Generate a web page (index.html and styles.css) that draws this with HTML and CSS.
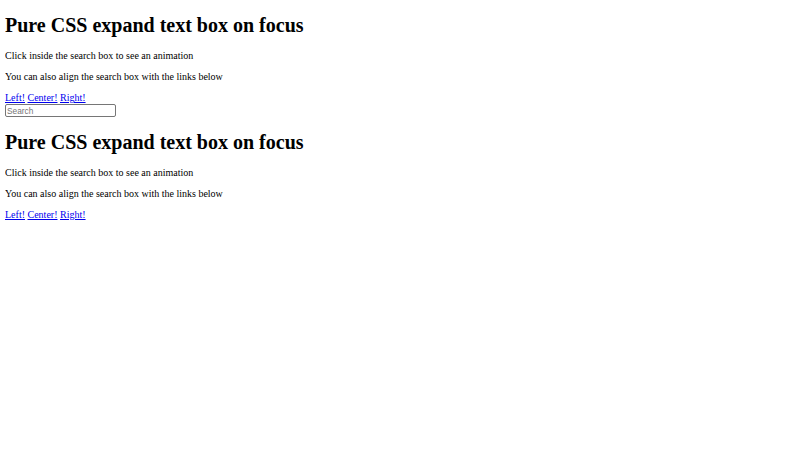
FILE: index.html
```html
<!DOCTYPE html>
<html>
<head>
<meta charset="utf-8">
<title>Pure CSS expand text box on focus</title>
<link rel="stylesheet" href="styles.css">
</head>
<body>
<h1 class="title title-first">Pure CSS expand text box on focus</h1>
<p class="text">Click inside the search box to see an animation</p>
<p class="text">You can also align the search box with the links below</p>
<div class="links"><a href="#">Left!</a> <a href="#">Center!</a> <a href="#">Right!</a></div>
<form class="search-form"><input class="search" type="text" placeholder="Search"></form>
<h1 class="title">Pure CSS expand text box on focus</h1>
<p class="text">Click inside the search box to see an animation</p>
<p class="text">You can also align the search box with the links below</p>
<div class="links"><a href="#">Left!</a> <a href="#">Center!</a> <a href="#">Right!</a></div>
</body>
</html>
```
FILE: styles.css
```css
html {
  background: #fff;
}
body {
  margin: 0 5px 5px;
  font-family: "Liberation Serif", "Times New Roman", serif;
  font-size: 10px;
  color: #000;
}
.title {
  font-size: 20px;
  font-weight: bold;
  margin: 13.4px 0;
}
.title-first {
  margin-top: 14px;
}
.text {
  margin: 10px 0;
}
.links a {
  color: #0000ee;
  text-decoration: underline;
}
.search-form {
  margin: 0;
  padding-top: 1px;
}
.search {
  display: block;
  box-sizing: border-box;
  width: 111px;
  height: 13px;
  margin: 0;
  padding: 0 1px;
  border: 1px solid #767676;
  border-radius: 2px;
  font-family: "Liberation Sans", Arial, sans-serif;
  font-size: 8.3px;
  background: #fff;
}
.search::placeholder {
  color: #757575;
}
```
